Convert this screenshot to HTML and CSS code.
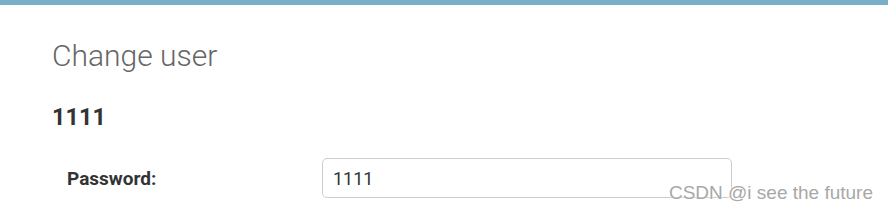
FILE: index.html
```html
<!DOCTYPE html>
<html lang="en">
<head>
    <meta charset="UTF-8">
    <meta name="viewport" content="width=device-width, initial-scale=1.0">
    <title>Change user</title>
    <link rel="stylesheet" href="styles.css">
</head>
<body>

<div class="top-bar"></div>

<div class="content">
    <h1>Change user</h1>
    <h2>1111</h2>

    <!-- password row -->
    <div class="form-row">
        <label for="password">Password:</label>
        <input type="text" id="password" value="1111">
    </div>
</div>

<div class="watermark">CSDN @i see the future</div>

</body>
</html>
```

FILE: styles.css
```css
body {
    font-family: Roboto, "Liberation Sans", Arial, sans-serif;
    margin: 0;
    background-color: #fff;
    color: #333;
    overflow: hidden;
}
.top-bar {
    height: 5px;
    background-color: #79aec8;
}
.content {
    padding: 0 52px;
}
h1 {
    margin: 31px 0 0;
    font-size: 30px;
    font-weight: 300;
    color: #666;
    line-height: 40px;
}
h2 {
    margin: 27px 0 0;
    font-size: 23.5px;
    font-weight: 700;
    color: #333;
    line-height: 28px;
}
.form-row {
    display: flex;
    align-items: center;
    margin-top: 27px;
    padding-left: 15px;
}
.form-row label {
    width: 255px;
    font-size: 19px;
    font-weight: 700;
    color: #333;
}
.form-row input {
    width: 410px;
    height: 40px;
    box-sizing: border-box;
    padding: 0 10px;
    font-family: Roboto, "Liberation Sans", Arial, sans-serif;
    font-size: 18px;
    color: #333;
    border: 1px solid #ccc;
    border-radius: 5px;
    background: #fff;
}
.watermark {
    position: absolute;
    right: 15px;
    bottom: 9px;
    font-family: "Liberation Sans", Arial, sans-serif;
    font-size: 19px;
    color: #a8a8a8;
    text-shadow: 0 0 2px #fff, 0 0 2px #fff;
}
```
